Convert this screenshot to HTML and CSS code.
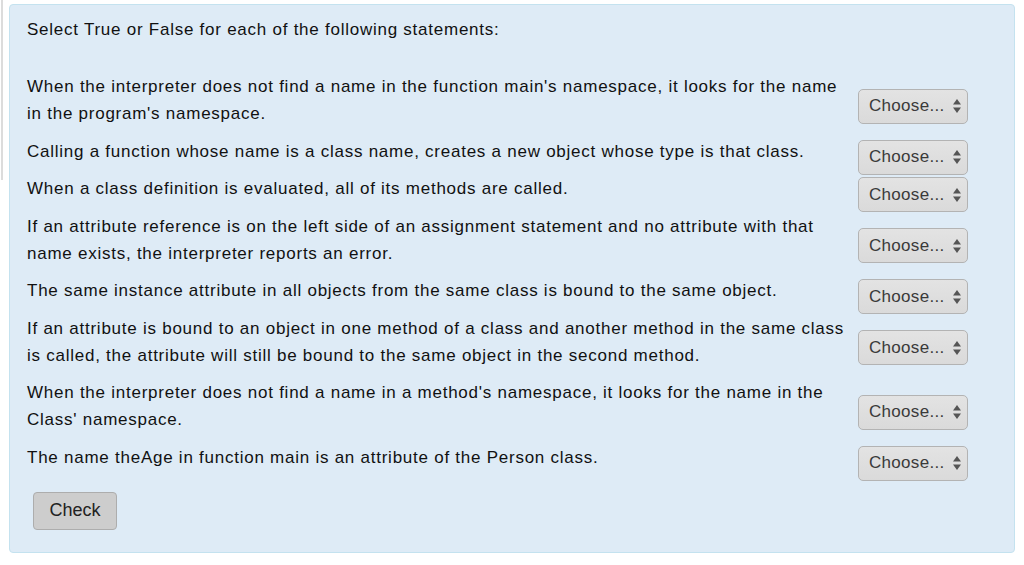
FILE: index.html
```html
<!DOCTYPE html>
<html>
<head>
<meta charset="utf-8">
<link rel="stylesheet" href="styles.css">
</head>
<body>
<div class="edge"></div>
<div class="panel">
  <p class="heading">Select True or False for each of the following statements:</p>
  <div class="rows">
    <div class="text">When the interpreter does not find a name in the function main's namespace, it looks for the name in the program's namespace.</div>
    <div class="pick"><span class="sel">Choose...<svg class="arr" viewBox="0 0 8 14"><path d="M4 0L8 5.5H0Z"/><path d="M4 14L8 8.5H0Z"/></svg></span></div>
    <div class="text">Calling a function whose name is a class name, creates a new object whose type is that class.</div>
    <div class="pick"><span class="sel">Choose...<svg class="arr" viewBox="0 0 8 14"><path d="M4 0L8 5.5H0Z"/><path d="M4 14L8 8.5H0Z"/></svg></span></div>
    <div class="text">When a class definition is evaluated, all of its methods are called.</div>
    <div class="pick"><span class="sel">Choose...<svg class="arr" viewBox="0 0 8 14"><path d="M4 0L8 5.5H0Z"/><path d="M4 14L8 8.5H0Z"/></svg></span></div>
    <div class="text">If an attribute reference is on the left side of an assignment statement and no attribute with that name exists, the interpreter reports an error.</div>
    <div class="pick"><span class="sel">Choose...<svg class="arr" viewBox="0 0 8 14"><path d="M4 0L8 5.5H0Z"/><path d="M4 14L8 8.5H0Z"/></svg></span></div>
    <div class="text">The same instance attribute in all objects from the same class is bound to the same object.</div>
    <div class="pick"><span class="sel">Choose...<svg class="arr" viewBox="0 0 8 14"><path d="M4 0L8 5.5H0Z"/><path d="M4 14L8 8.5H0Z"/></svg></span></div>
    <div class="text">If an attribute is bound to an object in one method of a class and another method in the same class is called, the attribute will still be bound to the same object in the second method.</div>
    <div class="pick"><span class="sel">Choose...<svg class="arr" viewBox="0 0 8 14"><path d="M4 0L8 5.5H0Z"/><path d="M4 14L8 8.5H0Z"/></svg></span></div>
    <div class="text">When the interpreter does not find a name in a method's namespace, it looks for the name in the Class' namespace.</div>
    <div class="pick"><span class="sel">Choose...<svg class="arr" viewBox="0 0 8 14"><path d="M4 0L8 5.5H0Z"/><path d="M4 14L8 8.5H0Z"/></svg></span></div>
    <div class="text">The name theAge in function main is an attribute of the Person class.</div>
    <div class="pick"><span class="sel">Choose...<svg class="arr" viewBox="0 0 8 14"><path d="M4 0L8 5.5H0Z"/><path d="M4 14L8 8.5H0Z"/></svg></span></div>
  </div>
  <button class="check">Check</button>
</div>
</body>
</html>
```
FILE: styles.css
```css
html, body {
  margin: 0;
  padding: 0;
  background: #ffffff;
}
body {
  display: flex;
  align-items: flex-start;
  font-family: "Liberation Sans", Arial, sans-serif;
  color: #111;
  font-size: 17px;
  letter-spacing: 0.75px;
}
.edge {
  width: 2px;
  height: 180px;
  margin-left: 1px;
  background: #dcdcdc;
}
.panel {
  margin-top: 4px;
  margin-left: 6px;
  width: 1006px;
  height: 549px;
  box-sizing: border-box;
  background: #deebf6;
  border: 1px solid #c4e2ef;
  border-radius: 4px;
  padding: 11px 17px 0 17px;
}
.heading {
  margin: 0 0 30px 0;
  line-height: 27px;
}
.rows {
  display: grid;
  grid-template-columns: 824px 110px;
  column-gap: 7px;
}
.text {
  line-height: 27px;
  padding-bottom: 10.5px;
}
.pick {
  display: flex;
  align-items: center;
  padding-top: 2px;
}
.sel {
  display: flex;
  align-items: center;
  justify-content: space-between;
  box-sizing: border-box;
  width: 110px;
  height: 35px;
  padding: 0 6px 0 10px;
  border: 1px solid #b3b3b3;
  border-radius: 5px;
  background: linear-gradient(#e3e3e3, #dadada);
  color: #3a3a3a;
  font-size: 17px;
  letter-spacing: 0.3px;
}
.arr {
  width: 8px;
  height: 14px;
  fill: #555;
}
.check {
  margin: 10.5px 0 0 6px;
  width: 84px;
  height: 38px;
  background: #cdcdcd;
  border: 1px solid #adadad;
  border-radius: 4px;
  font-family: "Liberation Sans", Arial, sans-serif;
  font-size: 18px;
  color: #222;
  padding: 0;
}
```
